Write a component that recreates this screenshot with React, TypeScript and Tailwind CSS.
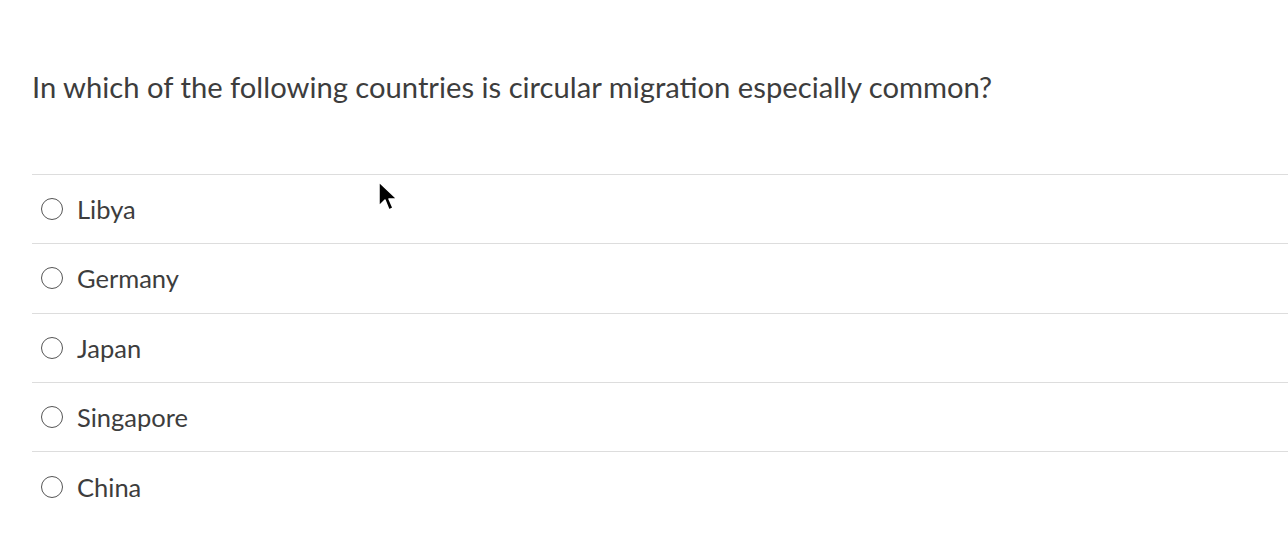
import React from 'react'

const options = ['Libya', 'Germany', 'Japan', 'Singapore', 'China']

export default function App() {
    return (
        <div className="relative w-[1288px] h-[556px] overflow-hidden bg-white text-[#3d3d3d] font-['Lato','Liberation_Sans',sans-serif]">
            {/* Question */}
            <div className="pl-8 pt-[69px] text-[29.2px] leading-[36px]">
                In which of the following countries is circular migration especially common?
            </div>

            {/* Answers */}
            <div className="ml-8 mt-[69px] border-t border-[#dddddd]">
                {options.map((opt) => (
                    <label key={opt} className="flex items-center h-[69.3px] border-b border-[#dddddd] last:border-b-0">
                        <span className="ml-[9px] w-[22px] h-[22px] rounded-full border-[1.5px] border-[#555]" />
                        <span className="ml-[14px] text-[25.5px]">{opt}</span>
                    </label>
                ))}
            </div>

            {/* Mouse pointer */}
            <svg className="absolute left-[377px] top-[180px]" width="24" height="34" viewBox="0 0 24 34">
                <path d="M2 2 L2 26 L8 20 L12 30 L16 28 L12 19 L20 19 Z" fill="#000" stroke="#fff" strokeWidth="1.5" strokeLinejoin="round" />
            </svg>
        </div>
    )
}
